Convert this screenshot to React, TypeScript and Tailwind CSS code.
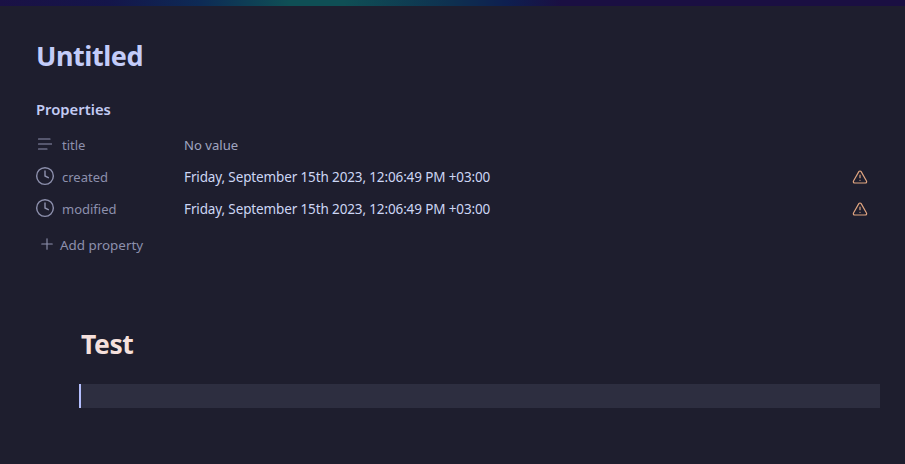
import { Clock, Plus, TriangleAlert } from "lucide-react";

const dateText = "Friday, September 15th 2023, 12:06:49 PM +03:00";

const rows = [
  { name: "created", value: dateText },
  { name: "modified", value: dateText },
];

const App = () => {
  return (
    <div className="w-[905px] h-[464px] overflow-hidden bg-[#1e1e2e] font-['Noto_Sans',sans-serif] flex flex-col">
      {/* Top gradient strip */}
      <div className="h-[6px] shrink-0 bg-[linear-gradient(90deg,#1a1145_0%,#14154a_12%,#0d2a55_22%,#0f4f55_32%,#0f4f55_38%,#0e3050_50%,#0e1f50_56%,#1a0f42_62%,#1a0f42_100%)]" />

      <div className="pl-9 pr-[37px] pt-[32px]">
        <h1 className="text-[27px] leading-[36px] font-bold text-[#c3ccf9] tracking-[-0.45px]">Untitled</h1>

        <h2 className="mt-[25px] text-[14.8px] leading-[20px] font-semibold text-[#c3cbf3]">Properties</h2>

        <div className="mt-[11px] flex flex-col">
          <div className="h-8 flex items-center">
            <div className="w-[148px] flex items-center text-[#8d90ad]">
              <svg className="w-[16px] h-[14px] -mt-[5px] mr-[10px]" viewBox="0 0 16 14" fill="none" stroke="currentColor" strokeWidth="1.2" strokeLinecap="round">
                <path d="M2.5 2H14M2.5 7H15.5M2.5 12H11" />
              </svg>
              <span className="text-[13px]">title</span>
            </div>
            <span className="text-[13.1px] text-[#a0a5c0]">No value</span>
          </div>

          {rows.map((row) => (
            <div key={row.name} className="h-8 flex items-center">
              <div className="w-[148px] flex items-center text-[#8d90ad]">
                <Clock className="w-5 h-5 -ml-[1px] -mt-[5px]" strokeWidth={1.7} />
                <span className="ml-[7px] text-[13px]">{row.name}</span>
              </div>
              <span className="flex-1 -mt-[1px] text-[13.5px] tracking-[-0.13px] text-[#cdd6f4]">{row.value}</span>
              <TriangleAlert className="w-4 h-4 -mt-[2px] text-[#e0a580]" strokeWidth={1.8} />
            </div>
          ))}
        </div>

        <div className="mt-[3px] h-[32px] pl-[2px] flex items-center text-[#8d90ad]">
          <Plus className="w-[18px] h-[18px] -mt-[2px]" strokeWidth={1.5} />
          <span className="ml-[4px] text-[13.4px]">Add property</span>
        </div>
      </div>

      {/* Note body */}
      <div className="mt-[65px] pl-[79px] pr-[25px]">
        <h2 className="pl-[2px] text-[26.5px] leading-[36px] font-bold text-[#f5e0dc] tracking-[-0.4px]">Test</h2>
        <div className="mt-[22px] h-6 bg-[#2d2e40] flex">
          <div className="w-[2px] h-full bg-[#b4befe]" />
        </div>
      </div>
    </div>
  );
};

export default App;
